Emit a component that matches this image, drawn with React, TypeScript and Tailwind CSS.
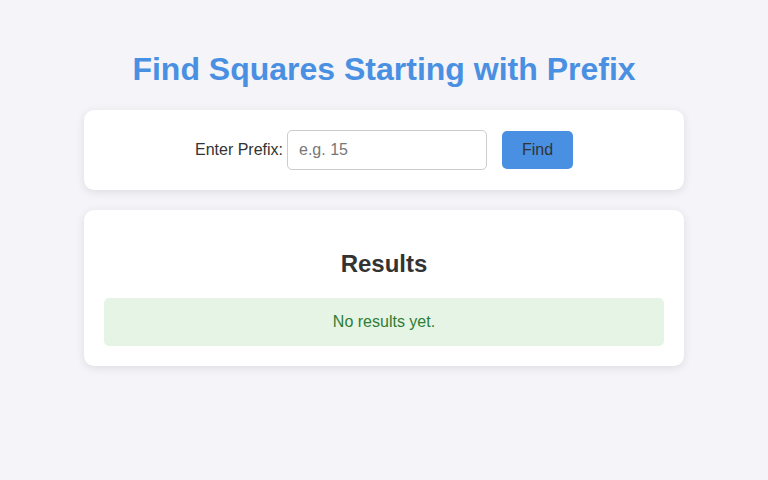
import { useState } from "react";

export default function App() {
  const [prefix, setPrefix] = useState("");

  return (
    <div
      className="min-h-[480px] bg-[#f4f4f9] pt-[51px] pb-5 text-[#333]"
      style={{ fontFamily: '"Liberation Sans", Arial, sans-serif' }}
    >
      <h1 className="mb-[22px] text-center text-[32px] font-bold leading-[37px] text-[#4a90e2]">
        Find Squares Starting with Prefix
      </h1>

      <div className="mx-auto w-[600px] rounded-[10px] bg-white p-5 shadow-[0_2px_10px_rgba(0,0,0,0.1)]">
        <div className="flex items-center justify-center">
          <label htmlFor="prefix" className="mr-[4px] text-base text-[#333]">
            Enter Prefix:
          </label>
          <input
            id="prefix"
            type="text"
            value={prefix}
            onChange={(e) => setPrefix(e.target.value)}
            placeholder="e.g. 15"
            className="h-10 w-[200px] rounded-[5px] border border-[#ccc] px-[11px] text-base text-[#333] placeholder:text-[#777] outline-none"
          />
          <button
            type="button"
            className="ml-[15px] h-[38px] w-[71px] rounded-[5px] bg-[#4a90e2] text-base text-[#333]"
          >
            Find
          </button>
        </div>
      </div>

      <div className="mx-auto mt-5 w-[600px] rounded-[10px] bg-white p-5 shadow-[0_2px_10px_rgba(0,0,0,0.1)]">
        <h2 className="mt-5 mb-5 text-center text-2xl font-bold leading-[28px] text-[#333]">Results</h2>
        <div className="rounded-[5px] bg-[#e6f4e6] py-[15px] text-center text-base leading-[18px] text-[#2e7d32]">
          No results yet.
        </div>
      </div>
    </div>
  );
}
